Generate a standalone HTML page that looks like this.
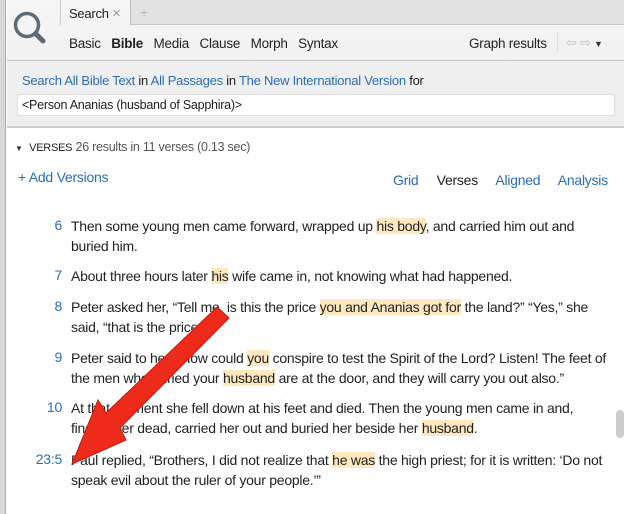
<!DOCTYPE html>
<html><head><style>
*{margin:0;padding:0;box-sizing:border-box}
body{width:624px;height:514px;overflow:hidden;background:#fff;font-family:"Liberation Sans Narrow","Liberation Sans",sans-serif;font-size:13px;color:#222;position:relative;letter-spacing:-0.25px}
.abs{position:absolute;white-space:nowrap}
.b{color:#2a6db5}
.hl{background:#fde8bf}
.v{position:absolute;left:71px;font-size:14px;line-height:19.5px;width:540px}
.n{position:absolute;right:562px;font-size:14px;color:#2a6db5}
</style></head><body>
<div class="abs" style="left:0;top:0;width:6px;height:514px;background:#d8d8d8;border-right:1px solid #aaa"></div>
<div class="abs" style="left:7px;top:0;width:617px;height:61px;background:linear-gradient(#f6f6f6,#f1f1f1)"></div>
<div class="abs" style="left:130px;top:0;width:494px;height:25px;background:#e2e2e2;border-left:1px solid #bbb;border-bottom:1px solid #c8c8c8"></div>
<div class="abs" style="left:60px;top:0;width:1px;height:25px;background:#ccc"></div>
<svg class="abs" style="left:10px;top:8px" width="42" height="50"><circle cx="17" cy="17" r="11.5" fill="none" stroke="#5d6a78" stroke-width="3.5"/><line x1="25.5" y1="25.5" x2="33" y2="33" stroke="#5d6a78" stroke-width="5" stroke-linecap="round"/><polygon points="40,44 44,44 42,47" fill="#888" transform="translate(-10,6)"/></svg>
<div class="abs" style="left:69px;top:5px;font-size:13px">Search <span style="color:#999;font-size:15px">×</span></div>
<div class="abs" style="left:140px;top:4px;color:#bbb;font-size:14px">+</div>
<div class="abs" style="left:69px;top:36px;font-size:13.5px">Basic&nbsp;&nbsp; <b>Bible</b>&nbsp;&nbsp; Media&nbsp;&nbsp; Clause&nbsp;&nbsp; Morph&nbsp;&nbsp; Syntax</div>
<div class="abs" style="left:469px;top:36px;font-size:13.5px">Graph results</div>
<div class="abs" style="left:557px;top:33px;width:1px;height:20px;background:#ddd"></div>
<div class="abs" style="left:566px;top:35px;color:#bbb;font-size:13px">⇦ ⇨ <span style="color:#333;font-size:9px">▼</span></div>
<div class="abs" style="left:7px;top:60px;width:617px;height:68px;background:#efefef;border-top:1px solid #c9c9c9;border-bottom:2px solid #cfcfcf"></div>
<div class="abs" style="left:22px;top:73px;font-size:13px"><span class="b">Search</span> <span class="b">All Bible Text</span> in <span class="b">All Passages</span> in <span class="b">The New International Version</span> for</div>
<div class="abs" style="left:17px;top:94px;width:598px;height:22px;background:#fff;border:1px solid #ddd;padding:3px 4px;font-size:12.5px">&lt;Person Ananias (husband of Sapphira)&gt;</div>
<div class="abs" style="left:15px;top:140px;font-size:12.5px;color:#555"><span style="font-size:8px;color:#333">▼</span>&nbsp; <span style="font-size:11px;color:#222">VERSES</span> 26 results in 11 verses (0.13 sec)</div>
<div class="abs b" style="left:18px;top:169px;font-size:14px">+ Add Versions</div>
<div class="abs" style="left:393px;top:172px;font-size:14px"><span class="b">Grid</span>&nbsp;&nbsp;&nbsp;&nbsp; Verses&nbsp;&nbsp;&nbsp;&nbsp; <span class="b">Aligned</span>&nbsp;&nbsp;&nbsp;&nbsp; <span class="b">Analysis</span></div>
<div class="abs" style="left:616px;top:410px;width:8px;height:28px;background:#ccc;border-radius:4px"></div>

<div class="n" style="top:217px">6</div><div class="v" style="top:217px">Then some young men came forward, wrapped up <span class="hl">his body</span>, and carried him out and buried him.</div>
<div class="n" style="top:267px">7</div><div class="v" style="top:267px">About three hours later <span class="hl">his</span> wife came in, not knowing what had happened.</div>
<div class="n" style="top:298px">8</div><div class="v" style="top:298px">Peter asked her, “Tell me, is this the price <span class="hl">you and Ananias got for</span> the land?” “Yes,” she said, “that is the price.”</div>
<div class="n" style="top:349px">9</div><div class="v" style="top:349px">Peter said to her, “How could <span class="hl">you</span> conspire to test the Spirit of the Lord? Listen! The feet of the men who buried your <span class="hl">husband</span> are at the door, and they will carry you out also.”</div>
<div class="n" style="top:399px">10</div><div class="v" style="top:399px">At that moment she fell down at his feet and died. Then the young men came in and, finding her dead, carried her out and buried her beside her <span class="hl">husband</span>.</div>
<div class="n" style="top:451px">23:5</div><div class="v" style="top:451px">Paul replied, “Brothers, I did not realize that <span class="hl">he was</span> the high priest; for it is written: ‘Do not speak evil about the ruler of your people.’”</div>

<svg class="abs" style="left:0;top:0" width="624" height="514"><polygon points="72,464 98,400 106,413 217,307 229,318 120,428 126,440" fill="#ee2a1a" stroke="#c8180c" stroke-width="1"/></svg>
</body></html>
